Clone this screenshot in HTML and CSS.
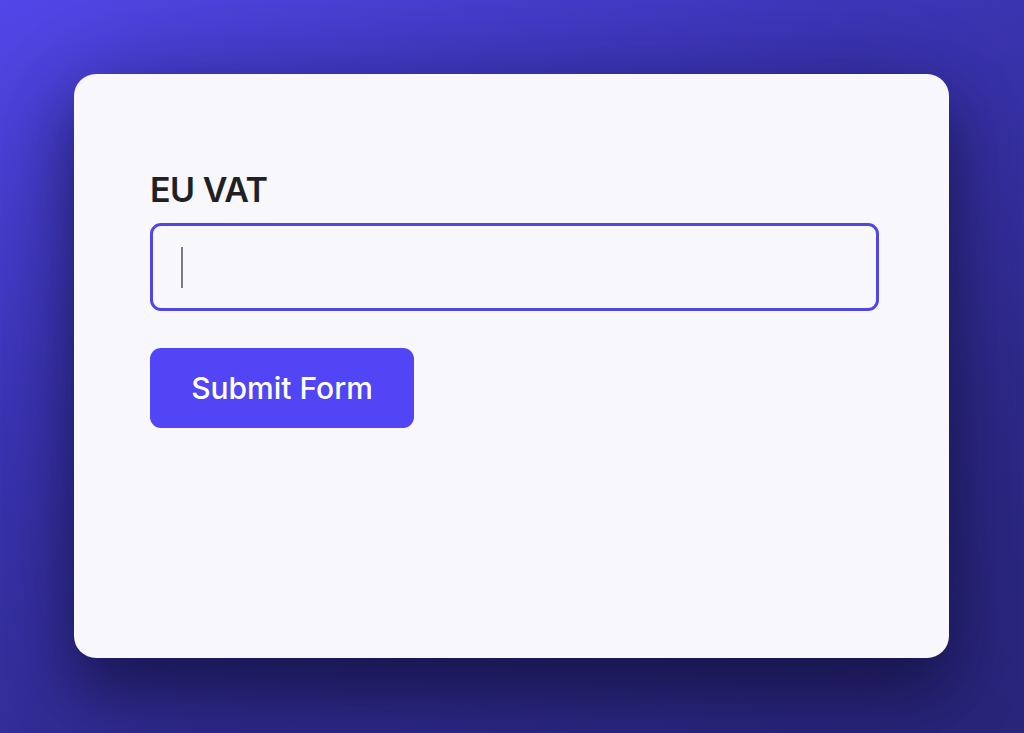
FILE: index.html
```html
<!DOCTYPE html>
<html lang="en">
<head>
<meta charset="utf-8">
<title>EU VAT</title>
<link rel="stylesheet" href="styles.css">
</head>
<body>
<main class="stage">
  <form class="card">
    <label class="label" for="vat">EU VAT</label>
    <div class="field" id="vat"><span class="caret"></span></div>
    <button class="submit" type="button">Submit Form</button>
  </form>
</main>
</body>
</html>
```
FILE: styles.css
```css
html, body {
  margin: 0;
  height: 100%;
}
body {
  background: linear-gradient(155deg, #5248ea 0%, #3d36b8 35%, #2f2b8c 70%, #29267a 100%);
  font-family: Inter, "Noto Sans", sans-serif;
  overflow: hidden;
}
.stage {
  box-sizing: border-box;
  height: 733px;
  padding: 74px 75px 75px 74px;
  display: flex;
}
.card {
  flex: 1;
  box-sizing: border-box;
  background: #f7f7fc;
  border-radius: 22px;
  box-shadow: 0 34px 60px rgba(14, 12, 50, 0.55), 0 10px 120px rgba(14, 12, 50, 0.35);
  padding: 96px 70px 0 76px;
  display: flex;
  flex-direction: column;
  align-items: flex-start;
}
.label {
  font-family: Inter, "Noto Sans", sans-serif;
  font-size: 34px;
  font-weight: 600;
  letter-spacing: -0.015em;
  color: #1f1f24;
  line-height: 40px;
  margin-bottom: 13px;
}
.field {
  align-self: stretch;
  box-sizing: border-box;
  height: 88px;
  border: 3px solid #5046e6;
  border-radius: 11px;
  background: #f7f7fc;
  padding: 0 28px;
  display: flex;
  align-items: center;
}
.caret {
  width: 2px;
  height: 41px;
  background: #7b7b80;
}
.submit {
  margin-top: 37px;
  width: 264px;
  height: 80px;
  border: 0;
  border-radius: 11px;
  background: #5145f5;
  color: #ffffff;
  font-family: Inter, "Noto Sans", sans-serif;
  font-size: 30px;
  font-weight: 500;
  letter-spacing: 0;
  padding: 0;
}
```
